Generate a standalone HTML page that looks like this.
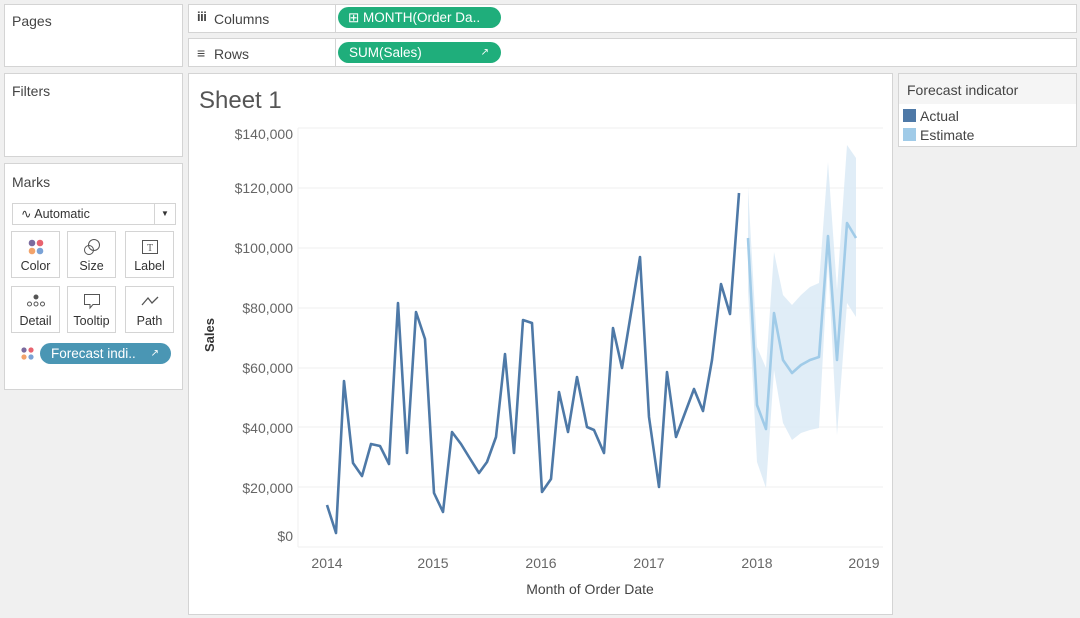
<!DOCTYPE html>
<html><head><meta charset="utf-8"><style>
body{margin:0;width:1080px;height:618px;background:#f0f0f0;font-family:"Liberation Sans",sans-serif;position:relative;overflow:hidden;color:#333}
.p{position:absolute;background:#fff;border:1px solid #d4d4d4;box-sizing:border-box}
.t{position:absolute;font-size:14px;color:#444}
.pill{position:absolute;border-radius:11px;color:#fff;font-size:13.5px;line-height:21px;height:21px;box-sizing:border-box}
.btn{position:absolute;width:49px;height:47px;border:1px solid #d4d4d4;box-sizing:border-box;background:#fff;font-size:12.5px;color:#333;text-align:center}
.btn span{position:absolute;bottom:4px;left:0;right:0}
.yl{position:absolute;right:0;font-size:14px;color:#666;text-align:right}
.xl{position:absolute;font-size:14px;color:#666;width:60px;text-align:center}
</style></head><body>
<div class="p" style="left:4px;top:4px;width:179px;height:63px"><div class="t" style="left:7px;top:8px">Pages</div></div>
<div class="p" style="left:188px;top:4px;width:889px;height:29px"><div class="t" style="left:8px;top:4px;font-weight:bold;font-size:13px;letter-spacing:-0.5px">iii</div><div class="t" style="left:25px;top:6px">Columns</div><div style="position:absolute;left:146px;top:0;bottom:0;border-left:1px solid #d4d4d4"></div></div>
<div class="pill" style="left:338px;top:7px;width:163px;background:#1fae7b;padding-left:10px">&#8862; MONTH(Order Da..</div>
<div class="p" style="left:188px;top:38px;width:889px;height:29px"><div class="t" style="left:8px;top:6px">&#8801;</div><div class="t" style="left:25px;top:7px">Rows</div><div style="position:absolute;left:146px;top:0;bottom:0;border-left:1px solid #d4d4d4"></div></div>
<div class="pill" style="left:338px;top:42px;width:163px;background:#1fae7b;padding-left:11px">SUM(Sales)<span style="position:absolute;right:12px;font-size:10px">&#8599;</span></div>
<div class="p" style="left:4px;top:73px;width:179px;height:84px"><div class="t" style="left:7px;top:9px">Filters</div></div>
<div class="p" style="left:4px;top:163px;width:179px;height:227px"><div class="t" style="left:7px;top:10px">Marks</div>
<div style="position:absolute;left:7px;top:39px;width:164px;height:22px;border:1px solid #d4d4d4;box-sizing:border-box;font-size:12.5px;line-height:20px;padding-left:8px">&#8767; Automatic<div style="position:absolute;right:0;top:0;width:20px;height:20px;border-left:1px solid #d4d4d4;text-align:center;font-size:8px">&#9660;</div></div>
</div>
<div class="btn" style="left:11px;top:231px"><svg width="16" height="16" style="margin-top:7px"><circle cx="4" cy="4" r="3.3" fill="#7b6b9e"/><circle cx="12" cy="4" r="3.3" fill="#e8636f"/><circle cx="4" cy="12" r="3.3" fill="#f2a36b"/><circle cx="12" cy="12" r="3.3" fill="#7aa2d6"/></svg><span>Color</span></div>
<div class="btn" style="left:67px;top:231px"><svg width="18" height="18" style="margin-top:6px" fill="none" stroke="#555"><circle cx="6" cy="12" r="4.5"/><circle cx="11" cy="7" r="5.5"/></svg><span>Size</span></div>
<div class="btn" style="left:125px;top:231px"><svg width="18" height="16" style="margin-top:7px" fill="none" stroke="#555"><rect x="1.5" y="1.5" width="15" height="13"/><text x="9" y="12" font-size="10" font-family="Liberation Serif" text-anchor="middle" fill="#555" stroke="none">T</text></svg><span>Label</span></div>
<div class="btn" style="left:11px;top:286px"><svg width="20" height="14" style="margin-top:7px" fill="none" stroke="#555"><circle cx="10" cy="3" r="2" fill="#555"/><circle cx="3.5" cy="10" r="2"/><circle cx="10" cy="10" r="2"/><circle cx="16.5" cy="10" r="2"/></svg><span>Detail</span></div>
<div class="btn" style="left:67px;top:286px"><svg width="18" height="17" style="margin-top:6px" fill="none" stroke="#555"><path d="M1.5 1.5H16.5V11.5H10L7 15V11.5H1.5Z"/></svg><span>Tooltip</span></div>
<div class="btn" style="left:125px;top:286px"><svg width="18" height="12" style="margin-top:8px" fill="none" stroke="#555" stroke-width="1.3"><path d="M1 10L7 3L11 8L17 2"/></svg><span>Path</span></div>
<svg style="position:absolute;left:21px;top:347px" width="13" height="13"><circle cx="3" cy="3" r="2.6" fill="#7b6b9e"/><circle cx="10" cy="3" r="2.6" fill="#e8636f"/><circle cx="3" cy="10" r="2.6" fill="#f2a36b"/><circle cx="10" cy="10" r="2.6" fill="#7aa2d6"/></svg>
<div class="pill" style="left:40px;top:343px;width:131px;background:#4a96b4;padding-left:11px;border-radius:12px">Forecast indi..<span style="position:absolute;right:12px;font-size:10px">&#8599;</span></div>
<div class="p" style="left:188px;top:73px;width:705px;height:542px">
<div style="position:absolute;left:10px;top:13px;font-size:24px;color:#555">Sheet 1</div>
</div>
<div style="position:absolute;left:200px;top:126px;width:93px;height:430px">
<div class="yl" style="top:0">$140,000</div><div class="yl" style="top:54px">$120,000</div><div class="yl" style="top:114px">$100,000</div><div class="yl" style="top:174px">$80,000</div><div class="yl" style="top:234px">$60,000</div><div class="yl" style="top:294px">$40,000</div><div class="yl" style="top:354px">$20,000</div><div class="yl" style="top:402px">$0</div>
</div>
<div style="position:absolute;left:202px;transform:rotate(-90deg);transform-origin:0 0;font-size:13px;color:#333;font-weight:bold;top:352px">Sales</div>
<div class="xl" style="left:297px;top:555px">2014</div><div class="xl" style="left:403px;top:555px">2015</div><div class="xl" style="left:511px;top:555px">2016</div><div class="xl" style="left:619px;top:555px">2017</div><div class="xl" style="left:727px;top:555px">2018</div><div class="xl" style="left:834px;top:555px">2019</div>
<div style="position:absolute;left:490px;top:581px;width:200px;text-align:center;font-size:14px;color:#444">Month of Order Date</div>
<svg style="position:absolute;left:0;top:0" width="1080" height="618">
<g stroke="#efefef" stroke-width="1"><line x1="298" x2="883" y1="128" y2="128"/><line x1="298" x2="883" y1="188" y2="188"/><line x1="298" x2="883" y1="248" y2="248"/><line x1="298" x2="883" y1="308" y2="308"/><line x1="298" x2="883" y1="368" y2="368"/><line x1="298" x2="883" y1="427" y2="427"/><line x1="298" x2="883" y1="487" y2="487"/><line x1="298" x2="883" y1="547" y2="547"/><line x1="298" x2="298" y1="128" y2="547"/></g>
<polygon fill="#dbeaf6" opacity="0.85" points="748,187 757,347 766,368 774,252 783,295 792,305 801,295 810,287 819,283 828,162 837,290 847,145 856,158 856,317 847,303 837,435 828,262 819,428 810,430 801,433 792,440 783,423 774,370 766,488 757,462 748,290"/>
<polyline fill="none" stroke="#4e79a7" stroke-width="2.6" stroke-linejoin="round" points="327,505 336,533 344,381 353,463 362,476 371,444 380,446 389,464 398,303 407,453 416,312 425,339 434,493 443,512 452,432 461,444 469,457 479,473 487,462 496,437 505,354 514,453 523,320 532,323 542,492 551,479 559,392 568,432 577,377 587,427 594,430 604,453 613,328 622,368 632,307 640,257 649,417 659,487 667,372 676,437 685,413 694,389 703,411 712,360 721,284 730,314 739,193"/>
<polyline fill="none" stroke="#a0cbe8" stroke-width="2.6" stroke-linejoin="round" points="748,238 757,405 766,429 774,313 783,360 792,373 801,365 810,360 819,357 828,236 837,360 847,223 856,238"/>
</svg>
<div class="p" style="left:898px;top:73px;width:179px;height:74px;background:#fff">
<div style="background:#f5f5f5;height:30px;font-size:14px;color:#444;padding:8px 0 0 8px;box-sizing:border-box">Forecast indicator</div>
<div style="position:absolute;left:4px;top:35px;width:13px;height:13px;background:#4e79a7"></div><div class="t" style="left:21px;top:34px">Actual</div>
<div style="position:absolute;left:4px;top:54px;width:13px;height:13px;background:#a0cbe8"></div><div class="t" style="left:21px;top:53px">Estimate</div>
</div>
</body></html>
